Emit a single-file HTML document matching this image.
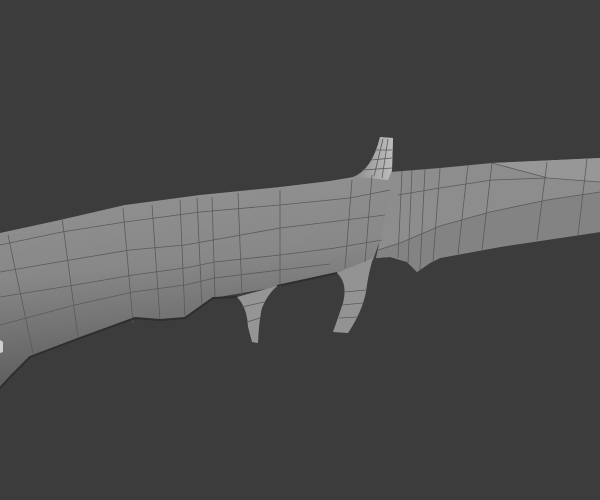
<!DOCTYPE html>
<html><head><meta charset="utf-8"><style>
html,body{margin:0;padding:0;background:#3c3c3c;width:600px;height:500px;overflow:hidden}
svg{display:block}
</style></head><body>
<svg width="600" height="500" viewBox="0 0 600 500">
<defs>
<linearGradient id="h" x1="0" y1="0" x2="0.15" y2="1">
<stop offset="0" stop-color="#a4a4a4"/><stop offset="0.12" stop-color="#949494"/><stop offset="0.55" stop-color="#888888"/><stop offset="1" stop-color="#5c5c5c"/></linearGradient>
<linearGradient id="g" x1="0" y1="0" x2="1" y2="0">
<stop offset="0" stop-color="#8a8a8a"/><stop offset="0.5" stop-color="#a6a6a6"/><stop offset="1" stop-color="#bdbdbd"/></linearGradient>
</defs>
<rect width="600" height="500" fill="#3c3c3c"/>
<!-- blade -->
<path d="M390,172 L440,168 L492,163 L600,158 L600,232 L500,247 L440,258 L430,263 L417,272 L407,262 L390,257 L376,258 L385,215 Z" fill="#8d8d8d"/>
<path d="M376,258 L378,250 L400,243 L440,226 L490,212 L547,200 L600,192 L600,232 L500,247 L440,258 L430,263 L417,272 L407,262 L390,257 Z" fill="#838383"/>
<path d="M492,163 L600,158 L600,182 L548,178 Z" fill="#979797"/>
<!-- handle -->
<path d="M0,233 L60,220 L125,205 L200,195 L280,187 L330,181 L353,177 Q372,170 380,137 L393,138 L392,170 L388,205 L380,240 L373,260 L337,273 L277,287 L213,298 L185,318 L160,320 L135,318 L80,338 L30,357 L12,375 L0,388 Z" fill="url(#h)"/>
<!-- guard spike -->
<path d="M353,177 Q372,170 380,137 L393,138 L392,170 L388,180 L370,178 Z" fill="url(#g)"/>
<!-- lower guard -->
<path d="M337,273 Q348,283 343,303 Q338,318 333,332 L348,333 Q362,312 366,292 Q368,275 373,258 Z" fill="#939393"/>
<path d="M237,297 Q247,307 248,327 L252,342 L258,343 Q259,320 262,308 Q267,295 277,286 Z" fill="#959595"/>
<path d="M0,340 L3,342 L3,352 L0,353 Z" fill="#d0d0d0"/>
<g stroke="#5a5a5a" stroke-width="0.8" fill="none">
<path d="M0,245 L62,232 L125,222 L200,212 L280,205 L350,198 L390,190"/>
<path d="M0,272 L70,260 L130,250 L185,245 L213,240 L280,228 L330,222 L385,215"/>
<path d="M0,297 L75,285 L133,275 L185,268 L215,262 L280,255 L335,248 L382,240"/>
<path d="M0,325 L75,305 L133,292 L185,285 L215,278 L280,270 L330,264"/>
<path d="M8,235 L33,353"/><path d="M62,218 L78,337"/><path d="M123,208 L133,323"/><path d="M152,205 L160,320"/>
<path d="M180,200 L185,318"/><path d="M197,198 L202,307"/><path d="M212,197 L215,297"/><path d="M238,193 L242,295"/>
<path d="M280,190 L280,287"/><path d="M352,180 L345,268"/><path d="M372,175 L365,262"/>
<path d="M383,139 L374,176 M388,139 L382,178"/><path d="M376,150 L392,150 M371,160 L392,158 M362,170 L392,168"/>
<path d="M344,292 L366,290 M342,305 L363,303 M339,318 L358,317"/>
<path d="M242,307 L264,302 M247,322 L260,318"/>
<path d="M402,171 L398,258"/><path d="M412,170 L408,264"/><path d="M425,169 L420,270"/><path d="M440,168 L433,262"/>
<path d="M468,165 L458,254"/><path d="M492,163 L482,250"/><path d="M547,162 L537,240"/><path d="M587,159 L578,235"/>
<path d="M378,250 L400,243 L440,226 L490,212 L547,200 L600,192"/>
<path d="M492,163 L548,178 L600,182"/>
<path d="M398,195 L440,188 L492,180 L547,178"/>
</g>
<path d="M0,388 L12,375 L30,357 L80,338 L135,318 L160,320 L185,318 L213,298 L237,297" stroke="#2e2e2e" stroke-width="2" fill="none"/>
<path d="M277,286 L337,273" stroke="#2e2e2e" stroke-width="2" fill="none"/>
</svg>
</body></html>
